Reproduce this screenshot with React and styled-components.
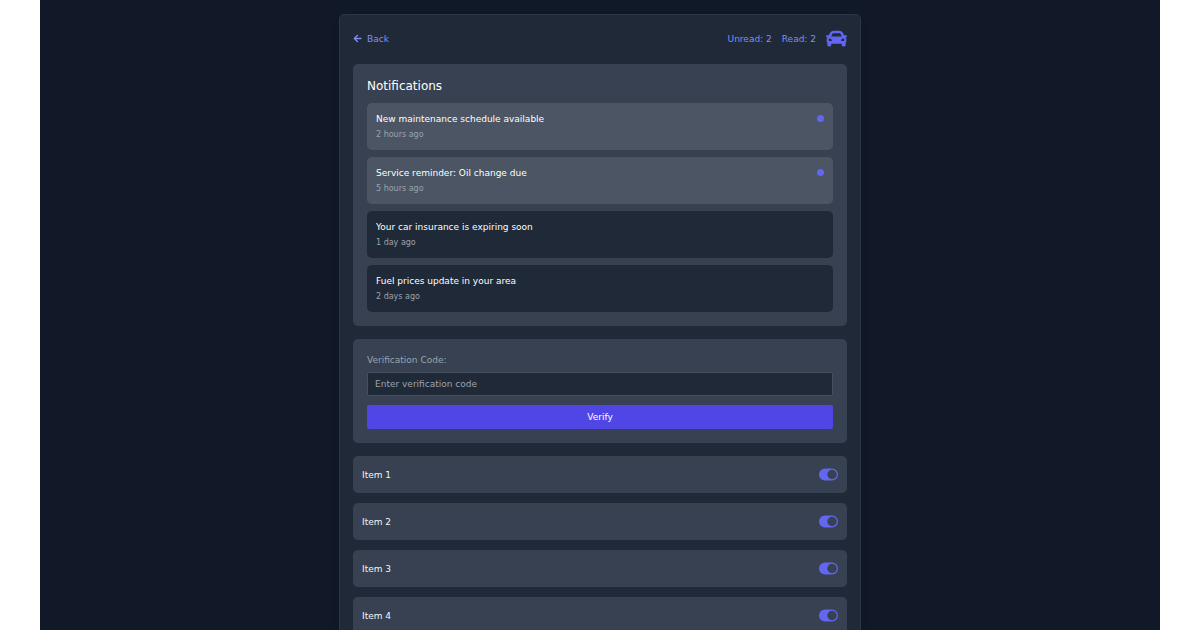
import React, { useState } from "react";
import styled, { createGlobalStyle } from "styled-components";
import { FaArrowLeft, FaCar } from "react-icons/fa";
import { BsToggleOff, BsToggleOn } from "react-icons/bs";

const initialNotifications = [
  { id: 1, message: "New maintenance schedule available", time: "2 hours ago", read: false },
  { id: 2, message: "Service reminder: Oil change due", time: "5 hours ago", read: false },
  { id: 3, message: "Your car insurance is expiring soon", time: "1 day ago", read: true },
  { id: 4, message: "Fuel prices update in your area", time: "2 days ago", read: true },
];

const initialItems = [
  { id: 1, name: "Item 1", on: true },
  { id: 2, name: "Item 2", on: true },
  { id: 3, name: "Item 3", on: true },
  { id: 4, name: "Item 4", on: true },
];

const App = () => {
  const [code, setCode] = useState("");
  const [items, setItems] = useState(initialItems);

  const unread = initialNotifications.filter((n) => !n.read).length;
  const read = initialNotifications.length - unread;

  const toggleItem = (id) => {
    setItems(items.map((item) => (item.id === id ? { ...item, on: !item.on } : item)));
  };

  return (
    <>
      <GlobalStyle />
      <Page>
        <Card>
          <Header>
            <BackLink href="#back">
              <FaArrowLeft size={9} />
              Back
            </BackLink>
            <Counts>
              <span>Unread: {unread}</span>
              <span>Read: {read}</span>
              <CarIcon size={21} />
            </Counts>
          </Header>

          <Panel>
            <Title>Notifications</Title>
            <NotificationList>
              {initialNotifications.map((n) => (
                <Notification key={n.id} $read={n.read}>
                  <div>
                    <Message>{n.message}</Message>
                    <Time>{n.time}</Time>
                  </div>
                  {!n.read && <Dot />}
                </Notification>
              ))}
            </NotificationList>
          </Panel>

          <Panel as="form" onSubmit={(e) => e.preventDefault()}>
            <Label htmlFor="code">Verification Code:</Label>
            <Input
              id="code"
              type="text"
              placeholder="Enter verification code"
              value={code}
              onChange={(e) => setCode(e.target.value)}
            />
            <VerifyButton type="submit">Verify</VerifyButton>
          </Panel>

          <ItemList>
            {items.map((item) => (
              <Item key={item.id}>
                <span>{item.name}</span>
                <HiddenCheck
                  type="checkbox"
                  checked={item.on}
                  onChange={() => toggleItem(item.id)}
                />
                {item.on ? <BsToggleOn size={19} /> : <BsToggleOff size={19} />}
              </Item>
            ))}
          </ItemList>
        </Card>
      </Page>
    </>
  );
};

export default App;

const GlobalStyle = createGlobalStyle`
  * {
    box-sizing: border-box;
  }

  body {
    margin: 0;
    background: #ffffff;
    font-family: "DejaVu Sans", sans-serif;
    font-size: 9px;
    line-height: 14px;
  }

  svg {
    display: block;
    flex-shrink: 0;
  }
`;

const Page = styled.main`
  min-height: 100vh;
  margin: 0 40px;
  padding: 14px;
  background: #111827;
  color: #f3f4f6;
  display: flow-root;
`;

const Card = styled.div`
  display: flex;
  flex-direction: column;
  gap: 13px;
  max-width: 522px;
  margin: 0 auto;
  padding: 13px;
  background: #1f2937;
  border: 1px solid #2d3847;
  border-radius: 5px;
  box-shadow: 0 6px 9px rgba(0, 0, 0, 0.1);
`;

const Header = styled.header`
  display: flex;
  justify-content: space-between;
  align-items: center;
  margin-bottom: 2px;
  color: #818cf8;
`;

const BackLink = styled.a`
  display: flex;
  align-items: center;
  gap: 5px;
  color: inherit;
  text-decoration: none;
`;

const Counts = styled.div`
  display: flex;
  align-items: center;
  gap: 10px;
`;

const CarIcon = styled(FaCar)`
  color: #6366f1;
`;

const Panel = styled.section`
  padding: 14px;
  background: #374151;
  border-radius: 5px;
`;

const Title = styled.h2`
  margin: 0 0 9px;
  color: #ffffff;
  font-size: 12px;
  font-weight: 400;
  line-height: 16px;
`;

const NotificationList = styled.ul`
  display: flex;
  flex-direction: column;
  gap: 7px;
  margin: 0;
  padding: 0;
  list-style: none;
`;

const Notification = styled.li`
  display: flex;
  justify-content: space-between;
  padding: 9px;
  background: ${({ $read }) => ($read ? "#1f2937" : "#4b5563")};
  border-radius: 5px;
`;

const Message = styled.p`
  margin: 0 0 3px;
  color: #ffffff;
`;

const Time = styled.p`
  margin: 0;
  color: #9ca3af;
  font-size: 8px;
  line-height: 12px;
`;

const Dot = styled.span`
  width: 7px;
  height: 7px;
  margin-top: 3px;
  background: #6366f1;
  border-radius: 50%;
`;

const Label = styled.label`
  display: block;
  margin-bottom: 5px;
  color: #9ca3af;
`;

const Input = styled.input`
  display: block;
  width: 100%;
  height: 24px;
  margin-bottom: 9px;
  padding: 0 7px;
  background: #1f2937;
  border: 1px solid #445060;
  border-radius: 2px;
  color: #f3f4f6;
  font: inherit;

  &::placeholder {
    color: #9ca3af;
  }
`;

const VerifyButton = styled.button`
  display: block;
  width: 100%;
  height: 24px;
  padding: 0;
  background: #4f46e5;
  border: 0;
  border-radius: 2px;
  color: #ffffff;
  font: inherit;
  cursor: pointer;
`;

const ItemList = styled.div`
  display: flex;
  flex-direction: column;
  gap: 10px;
`;

const Item = styled.label`
  display: flex;
  justify-content: space-between;
  align-items: center;
  position: relative;
  padding: 9px;
  background: #374151;
  border-radius: 5px;
  cursor: pointer;

  svg {
    color: #6366f1;
  }
`;

const HiddenCheck = styled.input`
  position: absolute;
  right: 9px;
  width: 19px;
  height: 19px;
  margin: 0;
  opacity: 0;
  cursor: pointer;
`;
